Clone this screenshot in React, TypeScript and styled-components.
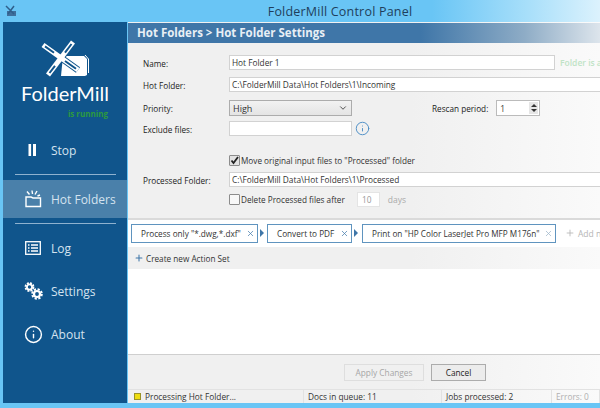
import React, { FC, ReactNode } from 'react';
import styled, { createGlobalStyle } from 'styled-components';
import { ChevronDown, Info, Plus, X } from 'lucide-react';

const GlobalStyle = createGlobalStyle`
  html, body {
    margin: 0;
    padding: 0;
    overflow: hidden;
    background: #69c5f5;
  }
  * { box-sizing: border-box; }
`;

const Window = styled.div`
  width: 600px;
  height: 408px;
  display: flex;
  flex-direction: column;
  overflow: hidden;
  font-family: "Open Sans", "Noto Sans", sans-serif;
  background: #69c5f5;
`;

const TitleBar = styled.div`
  height: 22px;
  flex: none;
  display: flex;
  align-items: center;
  justify-content: center;
  padding-left: 80px;
  font-size: 12.5px;
  letter-spacing: 0.2px;
  color: #1f3f5c;
  background: linear-gradient(90deg, #69c5f5 0%, #69c5f5 72%, #a8dffa 88%, #dcf2fd 100%);
`;

const TitleIcon = styled.svg`
  position: absolute;
  left: 5px;
  top: 5px;
`;

const Body = styled.div`
  flex: 1;
  min-height: 0;
  display: flex;
  padding: 0 0 5px 3px;
`;

const Sidebar = styled.nav`
  width: 124px;
  flex: none;
  margin-right: 1px;
  display: flex;
  flex-direction: column;
  background: #10558c;
  color: #d5e3ef;
`;

const Brand = styled.div`
  height: 109px;
  flex: none;
  display: flex;
  flex-direction: column;
  align-items: center;
  padding-top: 18px;
`;

const BrandName = styled.div`
  font-family: "Lato", "Open Sans", sans-serif;
  font-size: 20px;
  line-height: 24px;
  margin-top: 3px;
  color: #fff;
`;

const BrandStatus = styled.div`
  align-self: flex-end;
  margin: 3px 19px 0 0;
  font-size: 8px;
  line-height: 12px;
  font-weight: 700;
  color: #2c9a3e;
`;

const NavItem = styled.div<{ $active?: boolean }>`
  height: 38px;
  flex: none;
  display: flex;
  align-items: center;
  margin-bottom: 5px;
  font-size: 12px;
  background: ${({ $active }) => ($active ? '#4a80aa' : 'transparent')};
`;

const NavIcon = styled.span`
  width: 48px;
  flex: none;
  display: flex;
  justify-content: center;
  padding-left: 12px;
  color: #fff;
`;

const NavDivider = styled.div`
  height: 1px;
  flex: none;
  margin: 0 11px 5px 12px;
  background: #8fb2cf;
`;

const Main = styled.main`
  flex: 1;
  min-width: 0;
  display: flex;
  flex-direction: column;
  overflow: hidden;
  background: linear-gradient(90deg, #f0f0f0 0%, #f0f0f0 60%, #fafafa 100%);
`;

const Header = styled.h1`
  height: 20px;
  flex: none;
  margin: 1px 0 0;
  padding-left: 9px;
  font-size: 11.5px;
  line-height: 20px;
  font-weight: 700;
  color: #e8eff5;
  background: linear-gradient(90deg, #3f76a8 0%, #3f76a8 62%, #8eacc6 84%, #dde5ec 100%);
`;

const Form = styled.div`
  height: 175px;
  flex: none;
  padding-left: 15px;
  display: flex;
  flex-direction: column;
`;

const Row = styled.div<{ $top: number }>`
  display: flex;
  align-items: center;
  margin-top: ${({ $top }) => $top}px;
`;

const Label = styled.label`
  width: 86px;
  flex: none;
  padding-top: 1px;
  font-size: 8.2px;
  font-weight: 500;
  color: #222;
`;

const Field = styled.div<{ $width: number; $height?: number; $muted?: boolean; $gap?: number }>`
  width: ${({ $width }) => $width}px;
  height: ${({ $height }) => $height ?? 15}px;
  flex: none;
  display: flex;
  align-items: center;
  margin-left: ${({ $gap }) => $gap ?? 0}px;
  padding: 0 2px;
  font-size: 8.3px;
  font-weight: 500;
  white-space: nowrap;
  background: #fff;
  border: 1px solid ${({ $muted }) => ($muted ? '#e4e4e4' : '#d2d2d2')};
  color: ${({ $muted }) => ($muted ? '#999' : '#333')};
`;

const Select = styled(Field)`
  justify-content: space-between;
  padding: 0 3px;
  background: linear-gradient(#f2f2f2, #e4e4e4);
  border-color: #acacac;
  font-size: 9px;
`;

const FolderStatus = styled.span`
  margin-left: 5px;
  font-size: 8.5px;
  font-weight: 600;
  white-space: nowrap;
  color: #bfe3c6;
`;

const RescanLabel = styled.span`
  margin: 0 8px 0 80px;
  font-size: 8.2px;
  font-weight: 500;
  color: #222;
  white-space: nowrap;
`;

const Spin = styled(Field)`
  justify-content: space-between;
  padding: 0 1px 0 3px;
  border-color: #bbb;
`;

const SpinArrows = styled.span`
  width: 9px;
  height: 12px;
  display: flex;
  flex-direction: column;
  align-items: center;
  justify-content: center;
  gap: 2px;
  background: #e6e6e6;
`;

const SpinArrow = styled.span<{ $down?: boolean }>`
  width: 0;
  height: 0;
  border-left: 3px solid transparent;
  border-right: 3px solid transparent;
  ${({ $down }) => ($down ? 'border-top: 3px solid #333;' : 'border-bottom: 3px solid #333;')}
`;

const InfoMark = styled.span`
  display: flex;
  margin-left: 3px;
  color: #4a8cc4;
`;

const Check = styled.span<{ $checked?: boolean }>`
  width: 11px;
  height: 11px;
  flex: none;
  display: flex;
  align-items: center;
  justify-content: center;
  margin-left: 86px;
  background: ${({ $checked }) => ($checked ? '#e2e2e2' : '#f8f8f8')};
  border: 1px solid #8c8c8c;
  border-radius: 1px;
`;

const CheckText = styled.span`
  margin-left: 1px;
  font-size: 8.2px;
  font-weight: 500;
  color: #333;
  white-space: nowrap;
`;

const DaysText = styled.span`
  margin-left: 8px;
  font-size: 8.5px;
  color: #aaa;
`;

const ActionBand = styled.div`
  height: 29px;
  flex: none;
  display: flex;
  align-items: center;
  padding: 1px 0 2px 3px;
  background: #fff;
  border-top: 2px solid #dadada;
`;

const Chip = styled.div<{ $width: number; $light?: boolean }>`
  width: ${({ $width }) => $width}px;
  height: 19px;
  flex: none;
  display: flex;
  align-items: center;
  justify-content: space-between;
  padding: 0 2px 0 9px;
  font-size: 8.2px;
  font-weight: 500;
  color: #333;
  white-space: nowrap;
  border: 1px solid #5f94bf;
  svg { color: ${({ $light }) => ($light ? '#9fb6c9' : '#4a7fae')}; }
`;

const Arrow = styled.span<{ $gap: number }>`
  width: 0;
  height: 0;
  flex: none;
  margin: 0 ${({ $gap }) => $gap}px 0 2px;
  border-left: 4px solid #3f76a8;
  border-top: 4px solid transparent;
  border-bottom: 4px solid transparent;
`;

const AddAction = styled.span`
  display: flex;
  align-items: center;
  gap: 3px;
  margin-left: 9px;
  font-size: 8.5px;
  color: #b5b5b5;
  white-space: nowrap;
`;

const CreateRow = styled.div`
  height: 22px;
  flex: none;
  display: flex;
  align-items: center;
  gap: 2px;
  padding-left: 6px;
  font-size: 8.2px;
  font-weight: 500;
  color: #333;
  svg { color: #3f76a8; }
`;

const WhiteArea = styled.div`
  height: 86px;
  flex: none;
  background: #fff;
  border-bottom: 1px solid #cfcfcf;
`;

const Buttons = styled.div`
  height: 34px;
  flex: none;
  display: flex;
  align-items: flex-start;
  gap: 7px;
  padding: 9px 0 0 216px;
`;

const Button = styled.button<{ $disabled?: boolean }>`
  width: ${({ $disabled }) => ($disabled ? 80 : 55)}px;
  height: 17px;
  padding: 0;
  font-family: inherit;
  font-size: 8.3px;
  font-weight: 500;
  color: ${({ $disabled }) => ($disabled ? '#a6a6a6' : '#222')};
  background: ${({ $disabled }) => ($disabled ? '#f0f0f0' : '#ececec')};
  border: 1px solid ${({ $disabled }) => ($disabled ? '#dedede' : '#acacac')};
`;

const StatusBar = styled.div`
  flex: 1;
  display: flex;
  border-top: 1px solid #e2e2e2;
`;

const StatusCell = styled.div<{ $width: number; $muted?: boolean }>`
  width: ${({ $width }) => $width}px;
  flex: none;
  display: flex;
  align-items: center;
  gap: 4px;
  padding-left: 4px;
  font-size: 8.3px;
  font-weight: 500;
  white-space: nowrap;
  color: ${({ $muted }) => ($muted ? '#b0b0b0' : '#333')};
  border-right: 1px solid #e2e2e2;
`;

const StatusLight = styled.span`
  width: 7px;
  height: 7px;
  margin-left: 2px;
  background: #eedd10;
  border: 1px solid #99922a;
`;

const LogoMark: FC = () => (
  <svg width="48" height="38" viewBox="0 0 48 38" fill="none">
    <path d="M22 16 H43 L46 19 V35 L44 36 H20 Z" fill="#fff" />
    <path d="M44 15 L47.5 19 V33" stroke="#fff" strokeWidth="1" />
    <path d="M2 5 L37 30" stroke="#10558c" strokeWidth="7" />
    <path d="M32 2 L7 35" stroke="#10558c" strokeWidth="7" />
    <path d="M2 5 L37 30" stroke="#fff" strokeWidth="5" />
    <path d="M32 2 L7 35" stroke="#fff" strokeWidth="5" />
    <path d="M4 6.4 L13 12.8 M24 21 L35 28.8" stroke="#10558c" strokeWidth="2" />
    <path d="M30.5 4 L24 12.6 M14 25.8 L8.5 33" stroke="#10558c" strokeWidth="2" />
  </svg>
);

const PauseIcon: FC = () => (
  <svg width="16" height="16" viewBox="0 0 16 16" fill="#fff">
    <rect x="3.5" y="2" width="2.6" height="12" />
    <rect x="8" y="2" width="3" height="12" />
  </svg>
);

const HotFolderIcon: FC = () => (
  <svg width="18" height="18" viewBox="0 0 18 18" fill="none" stroke="#fff" strokeWidth="1.4">
    <path d="M2 7 V16.5 H16.5 V8 H9 L7 7 Z" />
    <path d="M3 1.5 L5.5 4.5 M8 0.5 L8.5 4 M13 1 L11 4.5 M16 5 L13.5 6" />
  </svg>
);

const LogIcon: FC = () => (
  <svg width="16" height="14" viewBox="0 0 16 14" fill="none" stroke="#fff">
    <rect x="0.7" y="0.7" width="14.6" height="12.6" strokeWidth="1.3" />
    <path d="M3 4 H4.5 M6 4 H13 M3 7 H4.5 M6 7 H13 M3 10 H4.5 M6 10 H13" strokeWidth="1.3" />
  </svg>
);

const GearsIcon: FC = () => (
  <svg width="19" height="18" viewBox="0 0 19 18" fill="none" stroke="#fff">
    <circle cx="5.5" cy="5" r="2.6" strokeWidth="1.8" />
    <circle cx="5.5" cy="5" r="4" strokeWidth="1.8" strokeDasharray="2 1.14" />
    <circle cx="13" cy="12" r="3" strokeWidth="2.2" />
    <circle cx="13" cy="12" r="4.8" strokeWidth="2" strokeDasharray="2.2 1.57" />
  </svg>
);

interface NavEntryProps {
  icon: ReactNode;
  label: string;
  active?: boolean;
}

const NavEntry: FC<NavEntryProps> = ({ icon, label, active }) => (
  <NavItem $active={active}>
    <NavIcon>{icon}</NavIcon>
    <span>{label}</span>
  </NavItem>
);

export default function App() {
  return (
    <Window>
      <GlobalStyle />
      <TitleBar>
        <TitleIcon width="12" height="12" viewBox="0 0 12 12" fill="none">
          <rect x="2" y="6" width="9" height="5" fill="#3f6f9c" />
          <path d="M1 1 L9 9 M9 1 L3 9" stroke="#2f5f8c" strokeWidth="1.5" />
        </TitleIcon>
        FolderMill Control Panel
      </TitleBar>
      <Body>
        <Sidebar>
          <Brand>
            <LogoMark />
            <BrandName>FolderMill</BrandName>
            <BrandStatus>is running</BrandStatus>
          </Brand>
          <NavEntry icon={<PauseIcon />} label="Stop" />
          <NavDivider />
          <NavEntry icon={<HotFolderIcon />} label="Hot Folders" active />
          <NavDivider />
          <NavEntry icon={<LogIcon />} label="Log" />
          <NavEntry icon={<GearsIcon />} label="Settings" />
          <NavEntry icon={<Info size={19} strokeWidth={1.8} />} label="About" />
        </Sidebar>
        <Main>
          <Header>Hot Folders &gt; Hot Folder Settings</Header>
          <Form>
            <Row $top={12}>
              <Label>Name:</Label>
              <Field $width={326}>Hot Folder 1</Field>
              <FolderStatus>Folder is active</FolderStatus>
            </Row>
            <Row $top={7}>
              <Label>Hot Folder:</Label>
              <Field $width={400}>C:\FolderMill Data\Hot Folders\1\Incoming</Field>
            </Row>
            <Row $top={8}>
              <Label>Priority:</Label>
              <Select $width={123} $height={16}>
                High
                <ChevronDown size={10} strokeWidth={2} />
              </Select>
              <RescanLabel>Rescan period:</RescanLabel>
              <Spin $width={44} $height={16}>
                1
                <SpinArrows>
                  <SpinArrow />
                  <SpinArrow $down />
                </SpinArrows>
              </Spin>
            </Row>
            <Row $top={5}>
              <Label>Exclude files:</Label>
              <Field $width={123} />
              <InfoMark>
                <Info size={15} strokeWidth={1.5} />
              </InfoMark>
            </Row>
            <Row $top={19}>
              <Check $checked>
                <svg width="9" height="9" viewBox="0 0 9 9" fill="none" stroke="#222" strokeWidth="1.8">
                  <path d="M1.5 4.5 L3.5 7 L8 1" />
                </svg>
              </Check>
              <CheckText>Move original input files to "Processed" folder</CheckText>
            </Row>
            <Row $top={6}>
              <Label>Processed Folder:</Label>
              <Field $width={400}>C:\FolderMill Data\Hot Folders\1\Processed</Field>
            </Row>
            <Row $top={5}>
              <Check />
              <CheckText>Delete Processed files after</CheckText>
              <Field $width={23} $height={15} $muted $gap={12}>
                &nbsp;10
              </Field>
              <DaysText>days</DaysText>
            </Row>
          </Form>
          <ActionBand>
            <Chip $width={127}>
              Process only "*.dwg,*.dxf"
              <X size={9} strokeWidth={2} />
            </Chip>
            <Arrow $gap={3} />
            <Chip $width={85}>
              Convert to PDF
              <X size={9} strokeWidth={2} />
            </Chip>
            <Arrow $gap={4} />
            <Chip $width={194} $light>
              Print on "HP Color LaserJet Pro MFP M176n"
              <X size={9} strokeWidth={2} />
            </Chip>
            <AddAction>
              <Plus size={10} strokeWidth={2} />
              Add new Action
            </AddAction>
          </ActionBand>
          <CreateRow>
            <Plus size={10} strokeWidth={2.5} />
            Create new Action Set
          </CreateRow>
          <WhiteArea />
          <Buttons>
            <Button $disabled>Apply Changes</Button>
            <Button>Cancel</Button>
          </Buttons>
          <StatusBar>
            <StatusCell $width={176}>
              <StatusLight />
              Processing Hot Folder...
            </StatusCell>
            <StatusCell $width={138}>Docs in queue: 11</StatusCell>
            <StatusCell $width={110}>Jobs processed: 2</StatusCell>
            <StatusCell $width={48} $muted>
              Errors: 0
            </StatusCell>
          </StatusBar>
        </Main>
      </Body>
    </Window>
  );
}
